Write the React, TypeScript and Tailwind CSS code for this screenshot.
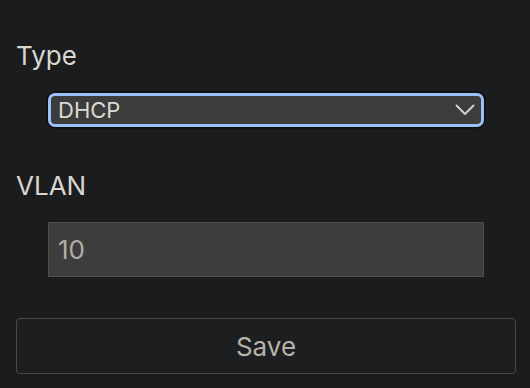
import React from 'react';

export default function App() {
  return (
    <div
      className="w-[530px] h-[388px] bg-[#1b1c1e] overflow-hidden flex flex-col pl-4 pt-10"
      style={{ fontFamily: 'Inter, "Noto Sans", sans-serif' }}
    >
      {/* Type */}
      <label className="text-[26px] leading-8 text-[#d9d6d0]">Type</label>
      <div className="ml-8 mt-[21px] w-[436px] h-[34px] flex items-center justify-between rounded-[7px] border-[3px] border-[#9bc3fa] bg-[#3c3c3c] pl-[7px] pr-[6px] shadow-[0_0_0_1.5px_#0d0e10]">
        <span className="text-[22px] leading-none text-[#dcdad4]">DHCP</span>
        <svg width="20" height="12" viewBox="0 0 20 12" fill="none">
          <path d="M1.5 1.5 L10 10 L18.5 1.5" stroke="#d2d0ca" strokeWidth="2" strokeLinecap="round" strokeLinejoin="round" />
        </svg>
      </div>

      {/* VLAN */}
      <label className="mt-[43px] text-[26px] leading-8 text-[#d9d6d0]">VLAN</label>
      <input
        readOnly
        value="10"
        className="ml-8 mt-5 w-[436px] h-[55px] border border-[#4a4f4f] bg-[#3d3d3d] px-[9px] text-[26px] text-[#b1ada5] outline-none"
      />

      {/* Save */}
      <button className="mt-[41px] w-[500px] h-[56px] rounded-[4px] border border-[#47484a] bg-[#1d1e20] text-[26px] text-[#b7b3ab]">
        Save
      </button>
    </div>
  );
}
